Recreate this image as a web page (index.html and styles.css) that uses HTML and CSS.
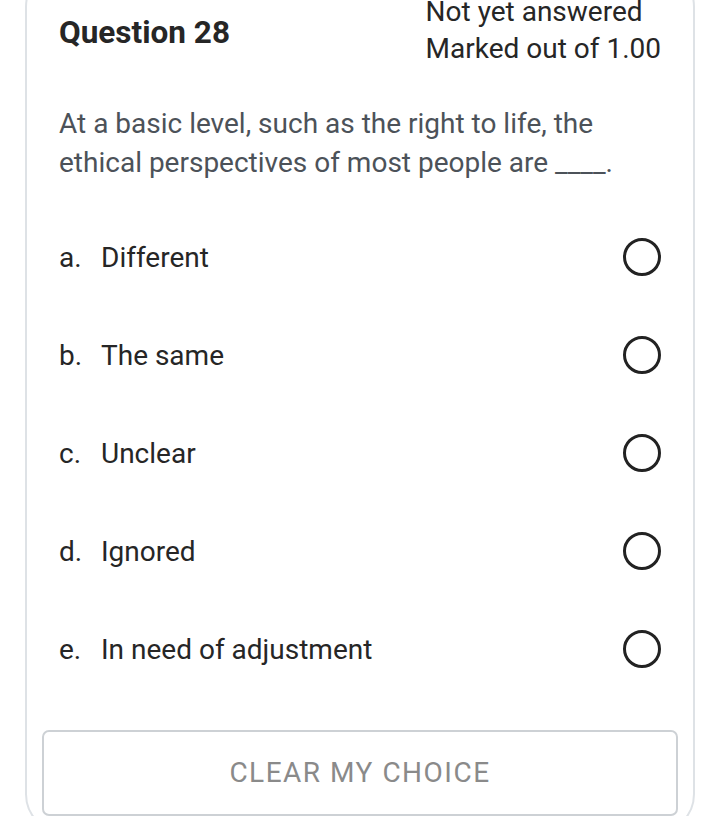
FILE: index.html
```html
<!DOCTYPE html>
<html lang="en">

<head>
    <meta charset="UTF-8">
    <meta name="viewport" content="width=device-width, initial-scale=1.0">
    <title>Question 28</title>
    <link rel="stylesheet" href="styles.css">
</head>

<body>
    <div class="que">
        <div class="que-head">
            <h3 class="que-no">Question 28</h3>
            <div class="que-info">
                <div>Not yet answered</div>
                <div>Marked out of 1.00</div>
            </div>
        </div>

        <p class="que-text">At a basic level, such as the right to life, the ethical perspectives of most people are ____.</p>

        <ul class="answer">
            <li><span class="ans-no">a.</span><span class="ans-text">Different</span><i class="radio"></i></li>
            <li><span class="ans-no">b.</span><span class="ans-text">The same</span><i class="radio"></i></li>
            <li><span class="ans-no">c.</span><span class="ans-text">Unclear</span><i class="radio"></i></li>
            <li><span class="ans-no">d.</span><span class="ans-text">Ignored</span><i class="radio"></i></li>
            <li><span class="ans-no">e.</span><span class="ans-text">In need of adjustment</span><i class="radio"></i></li>
        </ul>

        <a href="javascript:void(0);" class="btn-clear">Clear my choice</a>
    </div>
</body>

</html>
```

FILE: styles.css
```css
body {
    margin: 0;
    background: #fff;
    font-family: Roboto, "Liberation Sans", sans-serif;
    color: #212529;
}

/* 卡片 (页面已经往下滚动了一点) */
.que {
    width: 670px;
    margin: -33px 0 0 25px;
    padding: 24px 15px 16px 15px;
    box-sizing: border-box;
    border: 2px solid #dee2e6;
    border-radius: 40px;
}

.que-head {
    display: flex;
    justify-content: space-between;
    align-items: flex-start;
    padding: 0 17px;
}

.que-no {
    margin: 22px 0 0;
    font-size: 31.5px;
    line-height: 36px;
    font-weight: bold;
    color: #262626;
}

.que-info {
    font-size: 28px;
    line-height: 37px;
    color: #262626;
}

.que-text {
    margin: 37px 0 0;
    padding: 0 17px;
    font-size: 28px;
    line-height: 39px;
    color: #4c5259;
}

ul {
    margin: 26px 0 0;
    padding: 0 17px;
    list-style: none;
}

.answer li {
    display: flex;
    align-items: center;
    height: 98px;
    font-size: 28px;
    color: #262626;
}

.ans-no {
    width: 42px;
}

.ans-text {
    flex: 1;
}

.radio {
    display: block;
    width: 38px;
    height: 38px;
    box-sizing: border-box;
    border: 3px solid #222;
    border-radius: 50%;
}

.btn-clear {
    display: flex;
    align-items: center;
    justify-content: center;
    height: 86px;
    margin-top: 32px;
    box-sizing: border-box;
    border: 2px solid #cdd1d5;
    border-radius: 7px;
    font-size: 28px;
    letter-spacing: 1.5px;
    text-transform: uppercase;
    text-decoration: none;
    color: #8a8a8a;
    padding-bottom: 2px;
}
```
